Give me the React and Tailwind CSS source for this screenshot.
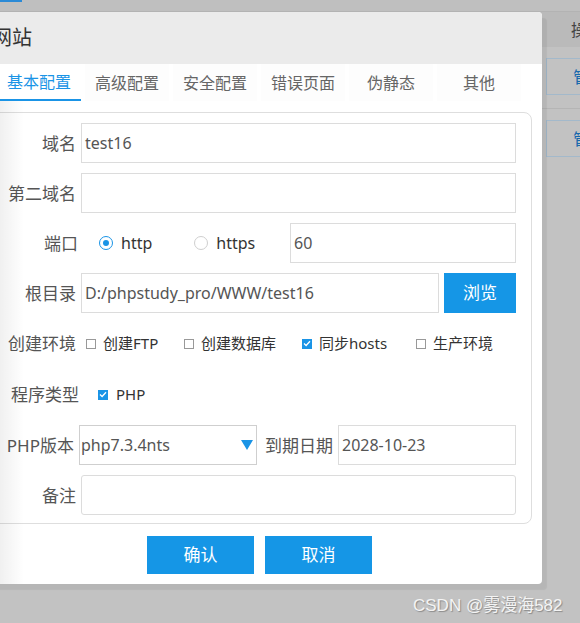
import React from "react";

const FONT = { fontFamily: '"Noto Sans", "Noto Sans CJK SC", sans-serif' };

function Label({ children }) {
  return (
    <div className="w-[85px] shrink-0 text-right text-[17px] text-[#555] leading-none whitespace-nowrap">
      {children}
    </div>
  );
}

function TextInput({ value, className = "" }) {
  return (
    <div
      className={
        "h-[40px] border border-[#dcdcdc] bg-white flex items-center pl-[3px] text-[16px] text-[#555] whitespace-nowrap overflow-hidden " +
        className
      }
    >
      {value}
    </div>
  );
}

function Radio({ checked }) {
  return checked ? (
    <div className="w-[14px] h-[14px] rounded-full border border-[#1a94e6] bg-white flex items-center justify-center">
      <div className="w-[6px] h-[6px] rounded-full bg-[#1a94e6]" />
    </div>
  ) : (
    <div className="w-[14px] h-[14px] rounded-full border border-[#cfcfcf] bg-white" />
  );
}

function Check({ checked }) {
  return checked ? (
    <div className="w-[10px] h-[10px] bg-[#1a94e6] flex items-center justify-center shrink-0">
      <svg width="8" height="7" viewBox="0 0 8 7">
        <path d="M1 3.6 L3.1 5.5 L7 1.3" stroke="white" strokeWidth="1.3" fill="none" />
      </svg>
    </div>
  ) : (
    <div className="w-[10px] h-[10px] border border-[#999] bg-white shrink-0" />
  );
}

function CheckItem({ checked, text, w }) {
  return (
    <div className={"flex items-center gap-[7px] shrink-0 " + w}>
      <Check checked={checked} />
      <span className="text-[15px] text-[#333] leading-none whitespace-nowrap">{text}</span>
    </div>
  );
}

export default function App() {
  const tabs = ["基本配置", "高级配置", "安全配置", "错误页面", "伪静态", "其他"];
  return (
    <div className="relative w-[580px] h-[623px] overflow-hidden bg-[#c2c2c2]" style={FONT}>
      {/* background page */}
      <div className="flex flex-col">
        <div className="h-[12px] bg-[#bfbfbf] border-b border-[#b3b3b3] relative">
          <div className="w-[22px] h-[2px] bg-[#2b8ad6]" />
        </div>
        <div className="h-[35px] bg-[#bababa] flex items-center pl-[571px] text-[16px] text-[#444] whitespace-nowrap">
          操作
        </div>
        <div className="pt-[11px] pb-[13px] border-b border-[#b5b5b5]">
          <div className="ml-[546px] w-[60px] h-[37px] border border-[#a3b9cb] flex items-center pl-[26px] text-[16px] text-[#1768ad] whitespace-nowrap">
            管理
          </div>
        </div>
        <div className="pt-[11px]">
          <div className="ml-[546px] w-[60px] h-[37px] border border-[#a3b9cb] flex items-center pl-[26px] text-[16px] text-[#1768ad] whitespace-nowrap">
            管理
          </div>
        </div>
      </div>

      {/* modal */}
      <div className="absolute left-[-20px] top-[12px] w-[562px] h-[572px] bg-white rounded-[4px] shadow-[5px_6px_1px_rgba(0,0,0,0.06)] flex flex-col">
        <div className="h-[52px] bg-[#ebebeb] rounded-t-[4px] flex items-center pl-[12px] text-[20px] text-[#333]">
          网站
        </div>
        <div className="h-[37px] flex gap-[4px] pl-[17px] bg-white">
          {tabs.map((t, i) => (
            <div
              key={t}
              className={
                "w-[84px] h-full flex items-center justify-center text-[16px] " +
                (i === 0
                  ? "text-[#1a94e6] border-b-2 border-[#1a94e6] bg-white"
                  : "text-[#666] bg-[#fdfdfd]")
              }
            >
              {t}
            </div>
          ))}
        </div>

        <div className="mt-[11px] mx-[10px] h-[412px] border border-[#dedede] rounded-[8px] pt-[10px] pr-[15px] flex flex-col gap-[10px]">
          <div className="h-[40px] flex items-center">
            <Label>域名</Label>
            <TextInput value="test16" className="ml-[5px] flex-1" />
          </div>
          <div className="h-[40px] flex items-center">
            <Label>第二域名</Label>
            <TextInput value="" className="ml-[5px] flex-1" />
          </div>
          <div className="h-[40px] flex items-center">
            <Label>
              <span className="relative left-[2px]">端口</span>
            </Label>
            <div className="ml-[23px] flex items-center">
              <Radio checked />
              <span className="ml-[8px] text-[16px] text-[#333] leading-none">http</span>
              <div className="ml-[42px]">
                <Radio />
              </div>
              <span className="ml-[8px] text-[16px] text-[#333] leading-none">https</span>
            </div>
            <TextInput value="60" className="ml-auto w-[226px]" />
          </div>
          <div className="h-[40px] flex items-center">
            <Label>根目录</Label>
            <TextInput value="D:/phpstudy_pro/WWW/test16" className="ml-[5px] flex-1" />
            <div className="ml-[5px] w-[72px] h-[40px] bg-[#1596e6] text-white text-[17px] flex items-center justify-center">
              浏览
            </div>
          </div>
          <div className="h-[41px] flex items-center">
            <Label>创建环境</Label>
            <div className="ml-[10px] flex items-center">
              <CheckItem text="创建FTP" w="w-[98px]" />
              <CheckItem text="创建数据库" w="w-[118px]" />
              <CheckItem checked text="同步hosts" w="w-[114px]" />
              <CheckItem text="生产环境" w="" />
            </div>
          </div>
          <div className="h-[41px] flex items-center">
            <Label>
              <span className="relative left-[3px]">程序类型</span>
            </Label>
            <div className="ml-[22px] flex items-center gap-[8px]">
              <Check checked />
              <span className="text-[15px] text-[#333] leading-none">PHP</span>
            </div>
          </div>
          <div className="h-[40px] flex items-center">
            <Label>
              <span className="relative left-[-2px]">PHP版本</span>
            </Label>
            <div className="ml-[3px] w-[178px] h-[40px] border border-[#cfcfcf] bg-white flex items-center pl-[1px] text-[16px] text-[#555]">
              <span>php7.3.4nts</span>
              <svg className="ml-auto mr-[3px]" width="12" height="10" viewBox="0 0 12 10">
                <path d="M0 0 H12 L6 10 Z" fill="#1a94e6" />
              </svg>
            </div>
            <div className="ml-[8px] text-[17px] text-[#555] whitespace-nowrap leading-none">到期日期</div>
            <TextInput value="2028-10-23" className="ml-auto w-[178px]" />
          </div>
          <div className="h-[40px] flex items-center">
            <Label>备注</Label>
            <TextInput value="" className="ml-[5px] flex-1 rounded-[3px]" />
          </div>
        </div>

        <div className="mt-[12px] pr-[3px] flex justify-center gap-[11px]">
          <div className="w-[107px] h-[38px] bg-[#1596e6] text-white text-[17px] flex items-center justify-center">
            确认
          </div>
          <div className="w-[107px] h-[38px] bg-[#1596e6] text-white text-[17px] flex items-center justify-center">
            取消
          </div>
        </div>

        <div className="pointer-events-none absolute left-[20px] top-[89px] bottom-0 w-[24px] bg-gradient-to-r from-black/[0.06] to-transparent" />
      </div>

      {/* watermark */}
      <div
        className="absolute left-[413px] top-[593px] text-[17px] text-[#f4f4f4] whitespace-nowrap [text-shadow:1px_1px_1px_#8a8a8a]"
        style={{ fontFamily: '"Liberation Sans", "Noto Sans CJK SC", sans-serif' }}
      >
        CSDN @雾漫海582
      </div>
    </div>
  );
}
